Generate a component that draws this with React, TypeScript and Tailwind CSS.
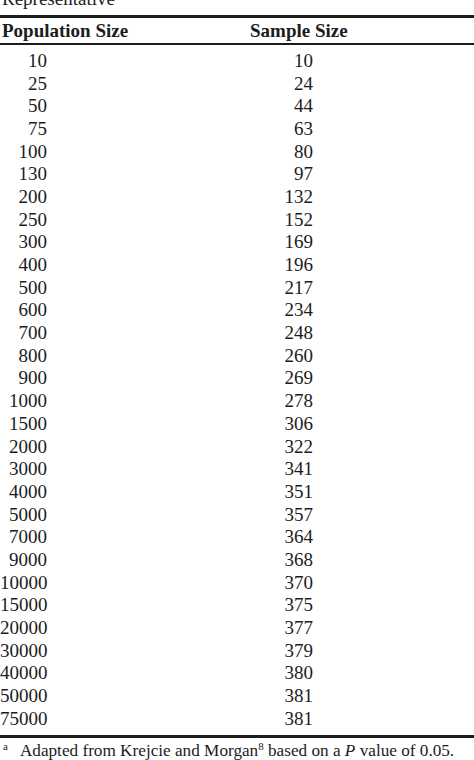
const rows: [string, string][] = [
  ["10", "10"],
  ["25", "24"],
  ["50", "44"],
  ["75", "63"],
  ["100", "80"],
  ["130", "97"],
  ["200", "132"],
  ["250", "152"],
  ["300", "169"],
  ["400", "196"],
  ["500", "217"],
  ["600", "234"],
  ["700", "248"],
  ["800", "260"],
  ["900", "269"],
  ["1000", "278"],
  ["1500", "306"],
  ["2000", "322"],
  ["3000", "341"],
  ["4000", "351"],
  ["5000", "357"],
  ["7000", "364"],
  ["9000", "368"],
  ["10000", "370"],
  ["15000", "375"],
  ["20000", "377"],
  ["30000", "379"],
  ["40000", "380"],
  ["50000", "381"],
  ["75000", "381"],
];

export default function App() {
  return (
    <div className="w-[474px] h-[760px] overflow-hidden bg-white text-[#1c1c1c] font-['Liberation_Serif',serif] text-[19px]">
      {/* caption, cut at the top */}
      <div className="mt-[-11px] h-[26px] leading-[20px] pl-[2px]">Representative</div>

      <div className="h-[3px] bg-[#1c1c1c]" />

      {/* header */}
      <div className="flex h-[25px] items-center font-bold leading-none">
        <div className="w-[250px] pl-[2px]">Population Size</div>
        <div>Sample Size</div>
      </div>
      <div className="h-[2px] bg-[#1c1c1c]" />

      {/* body */}
      <div className="pt-[4px]">
        {rows.map(([pop, sample]) => (
          <div key={pop} className="flex h-[22.69px] items-center leading-none">
            <div className="w-[47px] text-right">{pop}</div>
            <div className="w-[266px] text-right">{sample}</div>
          </div>
        ))}
      </div>

      <div className="mt-[5px] h-[3px] bg-[#1c1c1c]" />

      {/* footnote */}
      <div className="pt-[3px] pl-[3px] leading-[20px] text-[17.2px]">
        <sup className="text-[11px] mr-[12px]">a</sup>
        Adapted from Krejcie and Morgan<sup className="text-[11px]">8</sup> based on a <i>P</i> value of 0.05.
      </div>
    </div>
  );
}
